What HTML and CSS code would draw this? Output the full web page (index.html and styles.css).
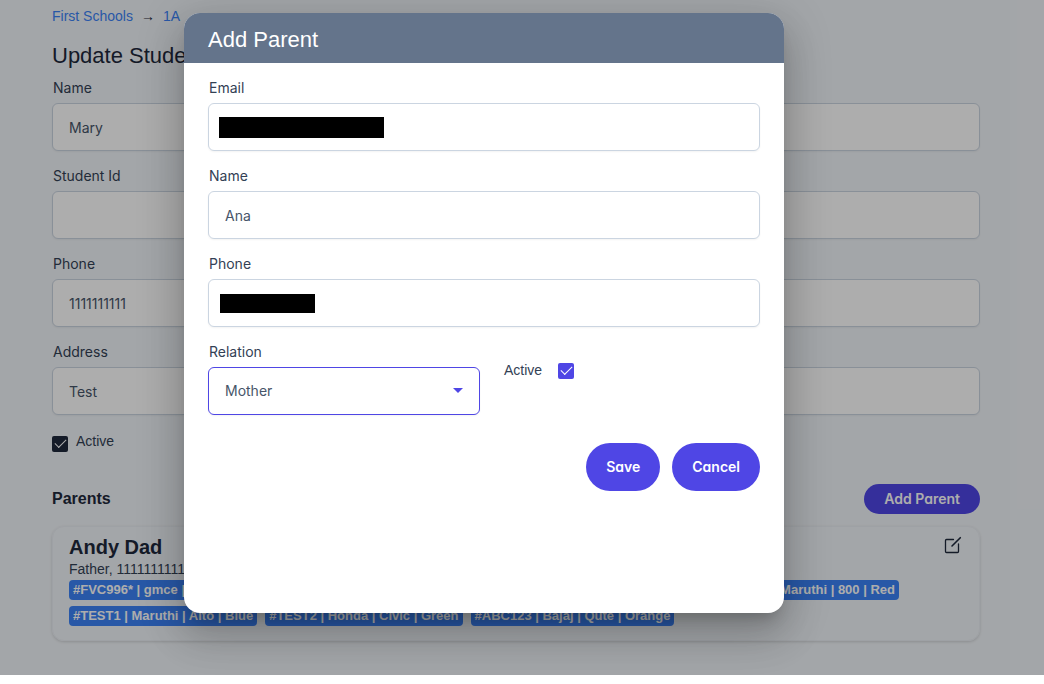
FILE: index.html
```
<!DOCTYPE html>
<html lang="en">
<head>
<meta charset="utf-8">
<title>Update Student</title>
<link rel="stylesheet" href="styles.css">
</head>
<body>
<div class="app">
  <main class="page">
    <nav class="crumbs"><a href="#">First Schools</a><span>→</span><a href="#">1A</a></nav>
    <h1 class="page-title">Update Student</h1>
    <form class="fields">
      <div class="field"><label for="s-name">Name</label><input class="control" id="s-name" value="Mary"></div>
      <div class="field"><label for="s-id">Student Id</label><input class="control" id="s-id"></div>
      <div class="field"><label for="s-phone">Phone</label><input class="control" id="s-phone" value="1111111111"></div>
      <div class="field"><label for="s-address">Address</label><input class="control" id="s-address" value="Test"></div>
      <div class="check-row"><input class="check check-dark" type="checkbox" id="s-active" checked><label for="s-active">Active</label></div>
    </form>
    <div class="section-head"><h2>Parents</h2><button class="btn btn-small" type="button">Add Parent</button></div>
    <section class="card">
      <div class="card-head">
        <h3>Andy Dad</h3>
        <button class="icon-btn" type="button" aria-label="Edit parent">
          <svg viewBox="0 0 18 18" width="18" height="18" fill="none" stroke="currentColor" stroke-linecap="round" stroke-linejoin="round"><path stroke-width="1.3" d="M9.5 3.5H2.500Q1.5 3.5 1.5 4.500V15.500Q1.5 16.500 2.500 16.500H13.500Q14.500 16.500 14.500 15.500V8"/><path stroke-width="1.600" d="M8 10L16.300 1.700"/></svg>
        </button>
      </div>
      <p class="card-sub">Father, 1111111111</p>
      <div class="tags"><span class="tag tag-wide"><span>#FVC996* | gmce |</span><span>Maruthi | 800 | Red</span></span></div>
      <div class="tags"><span class="tag">#TEST1 | Maruthi | Alto | Blue</span><span class="tag">#TEST2 | Honda | Civic | Green</span><span class="tag">#ABC123 | Bajaj | Qute | Orange</span></div>
    </section>
  </main>
  <div class="overlay">
    <div class="dialog" role="dialog" aria-labelledby="dlg-title">
      <h2 class="dialog-title" id="dlg-title">Add Parent</h2>
      <form class="dialog-body">
        <div class="fields">
          <div class="field"><label for="p-email">Email</label><div class="masked"><input class="control" id="p-email"><span class="mask mask-email"></span></div></div>
          <div class="field"><label for="p-name">Name</label><input class="control" id="p-name" value="Ana"></div>
          <div class="field"><label for="p-phone">Phone</label><div class="masked"><input class="control" id="p-phone"><span class="mask mask-phone"></span></div></div>
          <div class="split">
            <div class="field"><label for="p-relation">Relation</label>
              <div class="masked"><select class="control control-focus" id="p-relation"><option>Mother</option></select><span class="arrow"></span></div>
            </div>
            <div class="check-row check-after"><label for="p-active">Active</label><input class="check" type="checkbox" id="p-active" checked></div>
          </div>
        </div>
        <div class="actions"><button class="btn" type="button">Save</button><button class="btn" type="button">Cancel</button></div>
      </form>
    </div>
  </div>
</div>
</body>
</html>
```
FILE: styles.css
```
* { box-sizing: border-box; }
body { margin: 0; background: #fff; color: #1e293b; font: 14px/20px "Liberation Sans", Arial, sans-serif; }
h1, h2, h3, p { margin: 0; }
input, select, button { font: inherit; color: inherit; margin: 0; }

.app { position: relative; background: #f1f5f9; }
.page { padding: 6px 64px 34px 52px; }

.crumbs { display: flex; gap: 8px; }
.crumbs a { color: #3b82f6; text-decoration: none; }
.page-title { margin-top: 15px; font-size: 22px; line-height: 30px; font-weight: 400; }

.fields { display: flex; flex-direction: column; gap: 12px; }
.page .fields { margin-top: 4px; }
.field { display: flex; flex-direction: column; }
.field label { padding: 0 1px; height: 28px; line-height: 25px; font-family: Inter, sans-serif; color: #334155; }
.control {
  width: 100%; height: 48px; padding: 0 16px;
  border: 1px solid #cbd5e1; border-radius: 6px;
  background: #fff; color: #475569;
  font-family: Inter, sans-serif;
  box-shadow: 0 1px 2px rgba(0, 0, 0, .05);
  appearance: none; outline: none;
}
.control-focus { border-color: #4f46e5; }

.check-row { display: flex; align-items: flex-start; gap: 8px; color: #334155; }
.page .check-row { margin-top: 4px; }
.check {
  appearance: none; width: 16px; height: 16px; border-radius: 2px; margin-top: 3px;
  background: #4f46e5; display: grid; place-items: center;
}
.check::before {
  content: ""; width: 10px; height: 5px; margin-bottom: 4px;
  border: solid #fff; border-width: 0 0 1px 1px; transform: rotate(-45deg);
}
.check-dark { background: #1e293b; margin-top: 5px; }

.section-head { display: flex; justify-content: space-between; align-items: center; margin-top: 32px; }
.section-head h2 { font-size: 16px; line-height: 24px; font-weight: 700; }
.btn {
  height: 48px; padding: 0 20px; border: 0; border-radius: 24px;
  background: #4f46e5; color: #fff;
  font-family: Inter, sans-serif; font-size: 14px; font-weight: 600; cursor: pointer;
  font-feature-settings: "cv11";
}
.btn-small { height: 30px; }

.card {
  margin-top: 12px; padding: 8px 16px 14px; border: 1px solid #e9edf3; border-radius: 12px;
  box-shadow: 0 1px 3px rgba(0, 0, 0, .15);
}
.card-head { display: flex; justify-content: space-between; align-items: flex-start; }
.card-head h3 { font-size: 20px; line-height: 24px; font-weight: 700; }
.icon-btn { padding: 1px 1px 0 0; border: 0; background: none; display: flex; }
.card-sub { margin-bottom: 1px; color: #334155; }
.tags { display: flex; gap: 8px; margin-bottom: 6px; }
.tags:last-child { margin-bottom: 0; }
.tag {
  padding: 0 4px; border-radius: 4px; background: #3b82f6; color: #fff;
  font-size: 13px; line-height: 20px; font-weight: 700; white-space: nowrap;
}
.tag-wide { display: flex; justify-content: space-between; width: 830px; }

.overlay {
  position: absolute; inset: 0; padding: 13px 76px 0 0;
  display: flex; justify-content: center; align-items: flex-start;
  background: rgba(0, 0, 0, .32);
}
.dialog {
  width: 600px; padding-bottom: 122px; border-radius: 16px; overflow: hidden; background: #fff;
  box-shadow: 0 11px 15px -7px rgba(0, 0, 0, .2), 0 24px 38px 3px rgba(0, 0, 0, .14), 0 9px 46px 8px rgba(0, 0, 0, .12);
}
.dialog-title {
  padding: 12px 24px 8px; background: #64748b; color: #fff;
  font-size: 22px; line-height: 30px; font-weight: 400;
}
.dialog-body { padding: 12px 24px 0; }
.masked { position: relative; }
.mask { position: absolute; background: #000; }
.mask-email { left: 11px; top: 14px; width: 165px; height: 21px; }
.mask-phone { left: 12px; top: 15px; width: 95px; height: 19px; }
.arrow {
  position: absolute; right: 17px; top: 21px; pointer-events: none;
  border: 5px solid transparent; border-top-color: #4f46e5; border-bottom: 0;
}
.split { display: flex; align-items: flex-start; gap: 24px; }
.split .field { width: 272px; }
.check-after { gap: 16px; margin-top: 21px; }
.actions { display: flex; justify-content: flex-end; gap: 12px; margin-top: 28px; }
```
